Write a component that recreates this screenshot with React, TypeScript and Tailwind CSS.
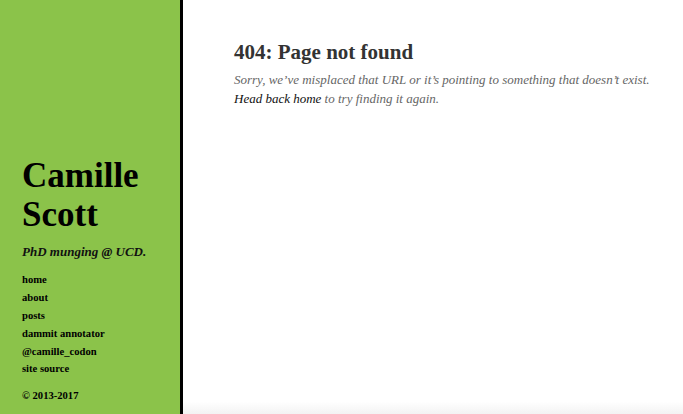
export default function App() {
  const links = ["home", "about", "posts", "dammit annotator", "@camille_codon", "site source"];
  return (
    <div className="flex h-[414px] w-[683px] overflow-hidden bg-white font-['Liberation_Serif',serif]">
      <aside className="flex w-[183px] shrink-0 flex-col justify-end border-r-[3px] border-black bg-[#8bc34a] px-[22px] pb-[10px]">
        <h1 className="text-[35px] font-bold leading-[39px] text-black">
          Camille
          <br />
          Scott
        </h1>
        <p className="mt-[8px] whitespace-nowrap text-[13px] font-bold italic text-[#111]">PhD munging @ UCD.</p>
        <nav className="mt-[10px] flex flex-col">
          {links.map((l) => (
            <a key={l} href="#" className="text-[10.6px] font-bold leading-[17.8px] text-black">
              {l}
            </a>
          ))}
        </nav>
        <p className="mt-[10px] text-[10.6px] font-bold text-black">© 2013-2017</p>
      </aside>
      <main className="flex flex-1 flex-col bg-gradient-to-b from-white from-[97%] to-[#f3f3f3]">
        <div className="pl-[51px] pt-[38px]">
          <h2 className="text-[21px] font-bold leading-[28px] text-[#333]">404: Page not found</h2>
          <p className="mt-[4px] whitespace-nowrap text-[13px] italic leading-[19px] text-[#666]">
            Sorry, we’ve misplaced that URL or it’s pointing to something that doesn’t exist.
            <br />
            <a href="#" className="text-[#111]">
              Head back home
            </a>{" "}
            to try finding it again.
          </p>
        </div>
      </main>
    </div>
  );
}
